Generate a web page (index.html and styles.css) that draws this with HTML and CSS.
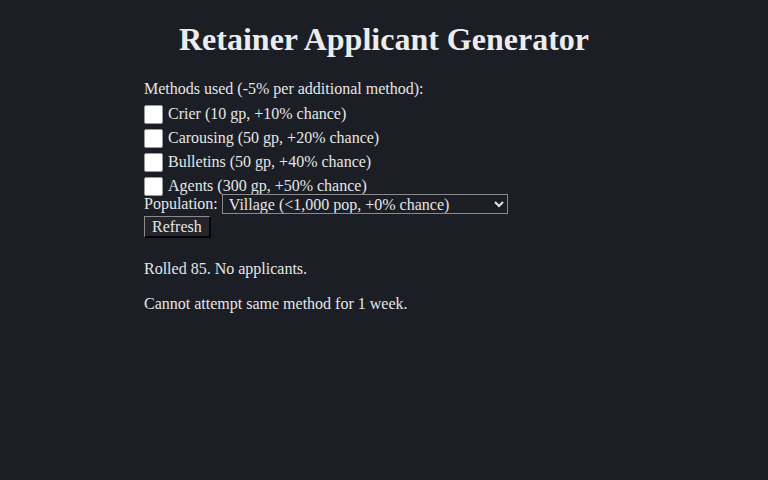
FILE: index.html
```html
<!DOCTYPE html>
<html lang="en">
<head>
    <meta charset="UTF-8">
    <meta name="viewport" content="width=device-width, initial-scale=1.0">
    <title>Retainer Applicant Generator</title>
    <link rel="stylesheet" href="styles.css">
</head>
<body>

    <div class="container">
        <h1>Retainer Applicant Generator</h1>

        <div class="methods">
            <div class="methods-title">Methods used (-5% per additional method):</div>
            <label class="method"><input type="checkbox" id="crier"> Crier (10 gp, +10% chance)</label>
            <label class="method"><input type="checkbox" id="carousing"> Carousing (50 gp, +20% chance)</label>
            <label class="method"><input type="checkbox" id="bulletins"> Bulletins (50 gp, +40% chance)</label>
            <label class="method"><input type="checkbox" id="agents"> Agents (300 gp, +50% chance)</label>
        </div>

        <div class="population">
            <label for="population">Population:</label>
            <select id="population">
                <option>Village (&lt;1,000 pop, +0% chance)</option>
                <option>Town (1,000-10,000 pop, +10% chance)</option>
                <option>City (10,000+ pop, +20% chance)</option>
            </select>
        </div>

        <button id="refresh-btn">Refresh</button>

        <p class="result" id="result">Rolled 85. No applicants.</p>
        <p class="note">Cannot attempt same method for 1 week.</p>
    </div>

</body>
</html>
```

FILE: styles.css
```css
body {
    font-family: 'Liberation Serif', 'Times New Roman', serif;
    font-size: 16px;
    background-color: #1b1e25;
    color: #e6e6e6;
    margin: 0;
    padding: 0;
}

.container {
    max-width: 480px;
    margin: 0 auto;
    padding-top: 1px;
}

h1 {
    text-align: center;
    font-size: 32px;
    margin: 20px 0 22px;
    color: #ececec;
}

.methods-title {
    margin-bottom: 1px;
}

.method {
    display: flex;
    align-items: flex-end;
    height: 24px;
}

.method input {
    appearance: none;
    -webkit-appearance: none;
    width: 19px;
    height: 19px;
    margin: 0 5px -1px 0;
    background: #ffffff;
    border: 1px solid #9a9a9a;
    border-radius: 2px;
    flex-shrink: 0;
}

.population {
    display: flex;
    align-items: center;
    gap: 4px;
    height: 20px;
    margin-top: -1px;
}

select {
    font-family: inherit;
    font-size: 16px;
    width: 286px;
    height: 20px;
    padding: 0 0 0 2px;
    background-color: #1b1e25;
    color: #e6e6e6;
    border: 1px solid #8a8a8a;
    border-radius: 0;
    color-scheme: dark;
}

button {
    font-family: inherit;
    font-size: 16px;
    margin-top: 2px;
    padding: 1px 7px 0;
    background-color: #23252a;
    color: #e6e6e6;
    border-top: 1px solid #8a8a8a;
    border-left: 1px solid #8a8a8a;
    border-right: 2px solid #050505;
    border-bottom: 2px solid #050505;
    cursor: pointer;
}

.result {
    margin: 22px 0 17px;
}

.note {
    margin: 17px 0;
}
```
